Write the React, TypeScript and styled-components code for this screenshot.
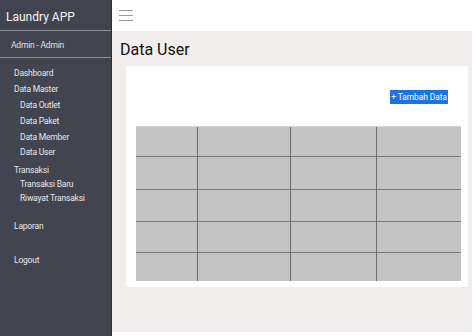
import styled, {createGlobalStyle} from 'styled-components';

const GlobalStyle = createGlobalStyle`
  html, body {
    margin: 0;
    padding: 0;
    background: #ffffff;
    font-family: Roboto, "Noto Sans", sans-serif;
  }
`;

// height = distance to the next item's baseline
const menu = [
  {label: 'Dashboard', level: 0, height: 16},
  {label: 'Data Master', level: 0, height: 16},
  {label: 'Data Outlet', level: 1, height: 16},
  {label: 'Data Paket', level: 1, height: 16},
  {label: 'Data Member', level: 1, height: 15},
  {label: 'Data User', level: 1, height: 18},
  {label: 'Transaksi', level: 0, height: 14},
  {label: 'Transaksi Baru', level: 1, height: 14},
  {label: 'Riwayat Transaksi', level: 1, height: 28},
  {label: 'Laporan', level: 0, height: 34},
  {label: 'Logout', level: 0, height: 14},
];

const colWidths = [61, 93, 86, 85];
const rowHeights = [30, 33, 32, 31, 28];

export default function App() {
  return (
    <>
      <GlobalStyle />
      <Layout>
        <Sidebar>
          <Brand>Laundry APP</Brand>
          <UserBox>Admin - Admin</UserBox>
          <Menu>
            {menu.map((item) => (
              <MenuItem key={item.label} $level={item.level} $height={item.height}>
                {item.label}
              </MenuItem>
            ))}
          </Menu>
        </Sidebar>
        <Main>
          <TopBar>
            <Burger>
              <span />
              <span />
              <span />
            </Burger>
          </TopBar>
          <Content>
            <Title>Data User</Title>
            <Card>
              <Actions>
                <AddButton>+ Tambah Data</AddButton>
              </Actions>
              <Table>
                <colgroup>
                  {colWidths.map((w, i) => (
                    <col key={i} style={{width: w}} />
                  ))}
                </colgroup>
                <tbody>
                  {rowHeights.map((h, r) => (
                    <tr key={r} style={{height: h}}>
                      {colWidths.map((_, c) => (
                        <Cell key={c} />
                      ))}
                    </tr>
                  ))}
                </tbody>
              </Table>
            </Card>
          </Content>
        </Main>
      </Layout>
    </>
  );
}

const Layout = styled.div`
  display: flex;
  width: 474px;
  height: 336px;
  overflow: hidden;
`;

const Sidebar = styled.aside`
  width: 111px;
  flex: none;
  background: #424550;
  color: #e8e8ea;
  border-right: 1px solid #2f313a;
  display: flex;
  flex-direction: column;
`;

const Brand = styled.div`
  height: 31px;
  box-sizing: border-box;
  padding: 10px 0 0 6px;
  font-size: 12px;
  line-height: 14px;
  color: #f4f4f5;
  border-bottom: 1px solid #8e9098;
`;

const UserBox = styled.div`
  height: 27px;
  box-sizing: border-box;
  padding: 9px 0 0 11px;
  font-size: 8.5px;
  letter-spacing: -0.2px;
  line-height: 10px;
  color: #e0e0e3;
  border-bottom: 1px solid #8e9098;
`;

const Menu = styled.nav`
  display: flex;
  flex-direction: column;
  padding-top: 10px;
`;

const MenuItem = styled.div<{$level: number; $height: number}>`
  font-size: 8.5px;
  letter-spacing: -0.2px;
  line-height: 10px;
  height: ${(p) => p.$height}px;
  padding-left: ${(p) => (p.$level ? 20 : 14)}px;
  color: #e6e6e8;
`;

const Main = styled.main`
  flex: 1;
  display: flex;
  flex-direction: column;
  min-width: 0;
`;

const TopBar = styled.header`
  height: 31px;
  flex: none;
  background: #ffffff;
  display: flex;
  align-items: center;
  padding-left: 7px;
`;

const Burger = styled.div`
  width: 14px;
  display: flex;
  flex-direction: column;
  gap: 4px;
  margin-top: -1px;

  span {
    display: block;
    height: 1px;
    background: #9a9a9a;
  }
`;

const Content = styled.section`
  flex: none;
  height: 301px;
  margin-right: 2px;
  background: #f0edec;
  padding: 9px 0 0 8px;
  box-sizing: border-box;
`;

const Title = styled.h1`
  margin: 0;
  font-size: 16px;
  font-weight: 400;
  color: #111;
  line-height: 19px;
`;

const Card = styled.div`
  margin: 7px 4px 0 6px;
  height: 221px;
  background: #ffffff;
  padding: 24px 7px 0 10px;
  box-sizing: border-box;
`;

const Actions = styled.div`
  display: flex;
  justify-content: flex-end;
  padding-right: 13px;
  height: 36px;
`;

const AddButton = styled.button`
  all: unset;
  background: #1a73e8;
  color: #ffffff;
  font-size: 8.3px;
  height: 14px;
  line-height: 14px;
  padding: 0 1px;
`;

const Table = styled.table`
  border-collapse: collapse;
  table-layout: fixed;
  width: 325px;
  background: #c4c4c4;
  border-top: 1px solid #d8d8d8;
`;

const Cell = styled.td`
  padding: 0;
  border-left: 1px solid #6e6e6e;
  border-top: 1px solid #7a7a7a;

  &:first-child {
    border-left: none;
  }

  tr:first-child > & {
    border-top: 1px solid #d4d4d4;
  }
`;
